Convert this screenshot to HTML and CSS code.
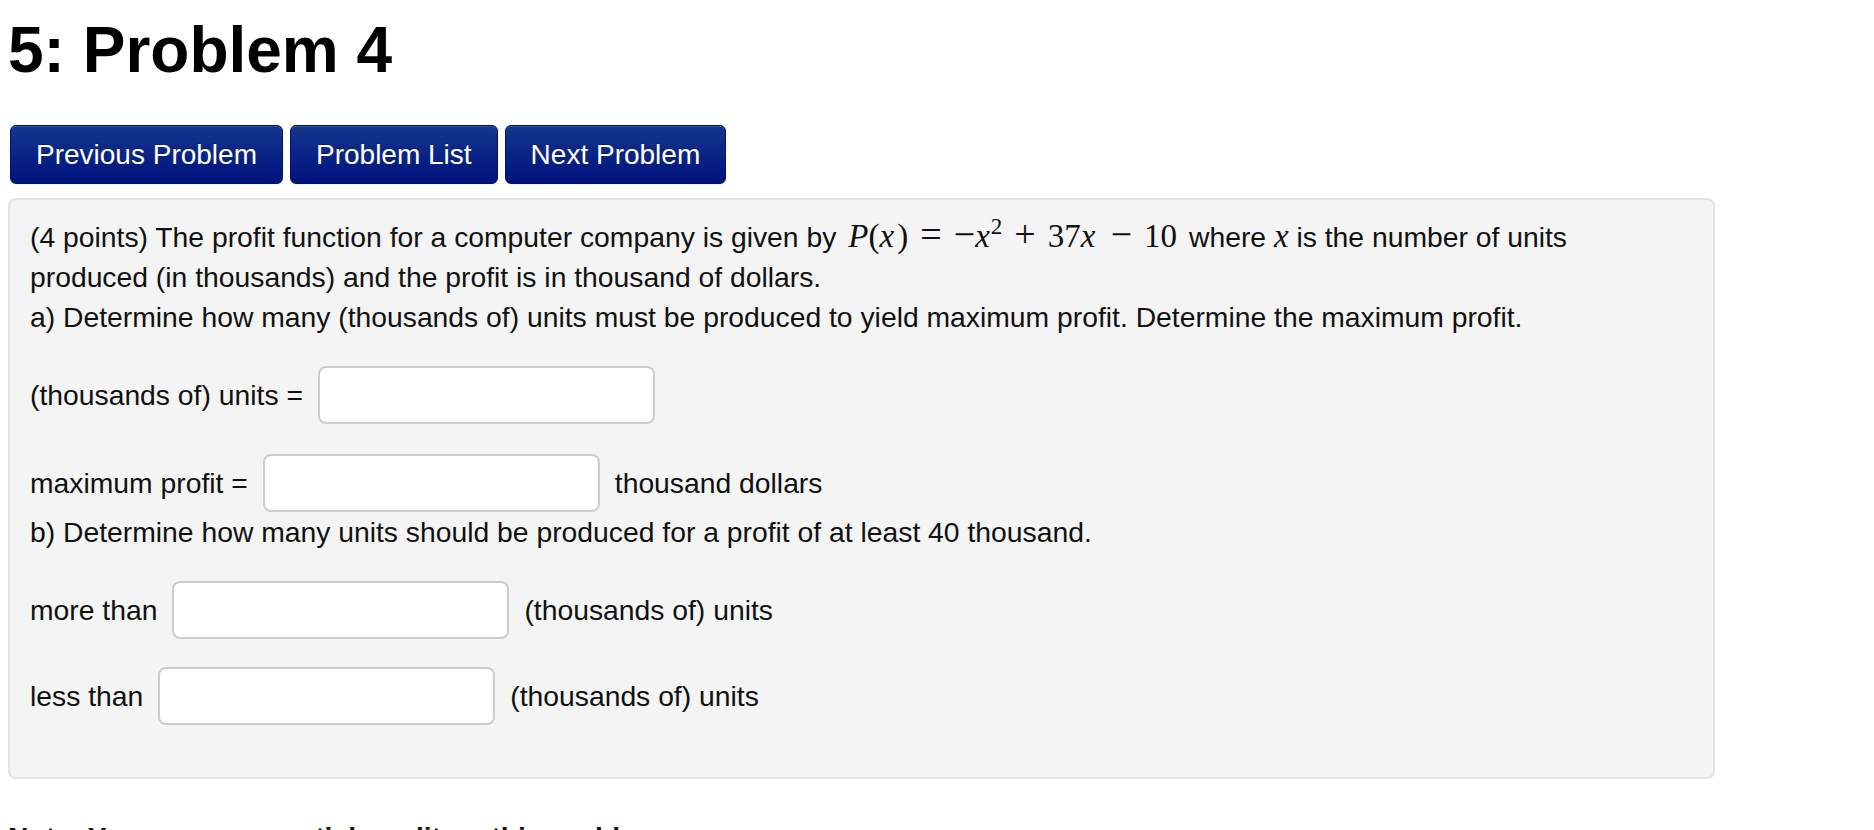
FILE: index.html
```html
<!DOCTYPE html>
<html lang="en">
<head>
    <meta charset="UTF-8">
    <title>5: Problem 4</title>
    <link rel="stylesheet" href="styles.css">
</head>
<body>
    <h1 class="problem-title">5: Problem 4</h1>

    <div class="nav-buttons">
        <a class="btn btn-primary" href="#">Previous Problem</a>
        <a class="btn btn-primary" href="#">Problem List</a>
        <a class="btn btn-primary" href="#">Next Problem</a>
    </div>

    <form class="problem-main">
        <p class="problem-text">
            (4 points) The profit function for a computer company is given by
            <span class="math"><i>P</i>(<i class="var">x</i>)<span class="op rel">=</span><span class="op">&minus;</span><i>x</i><sup>2</sup><span class="op bin">+</span>37<i class="var">x</i><span class="op bin">&minus;</span>10</span>
            where <span class="math math-inline"><i>x</i></span> is the number of units<br>
            produced (in thousands) and the profit is in thousand of dollars.<br>
            a) Determine how many (thousands of) units must be produced to yield maximum profit. Determine the maximum profit.
        </p>

        <div class="answer-row row-units">
            <label for="ans1">(thousands of) units =</label>
            <input type="text" id="ans1" class="answer">
        </div>

        <div class="answer-row row-profit">
            <label for="ans2">maximum profit =</label>
            <input type="text" id="ans2" class="answer">
            <span>thousand dollars</span>
        </div>

        <p class="problem-text">b) Determine how many units should be produced for a profit of at least 40 thousand.</p>

        <div class="answer-row row-more">
            <label for="ans3">more than</label>
            <input type="text" id="ans3" class="answer">
            <span>(thousands of) units</span>
        </div>

        <div class="answer-row row-less">
            <label for="ans4">less than</label>
            <input type="text" id="ans4" class="answer">
            <span>(thousands of) units</span>
        </div>
    </form>

    <p class="note">Note: You can earn partial credit on this problem.</p>
</body>
</html>
```

FILE: styles.css
```css
body {
    margin: 8px;
    font-family: "Liberation Sans", Arial, Helvetica, sans-serif;
    font-size: 28.3px;
    line-height: 40px;
    color: #111;
    background-color: #fff;
}

.problem-title {
    margin: 7px 0 0 0;
    font-size: 64px;
    line-height: 70px;
    font-weight: bold;
    color: #000;
}

.nav-buttons {
    display: flex;
    gap: 7px;
    margin: 40px 0 0 2px;
}

.btn {
    display: inline-block;
    padding: 9px 25px;
    border: 1px solid #001065;
    border-radius: 6px;
    font-size: 28px;
    line-height: 39px;
    text-decoration: none;
    color: #fff;
}

.btn-primary {
    background-image: linear-gradient(#14378f, #00127d);
    text-shadow: 0 -1px 0 rgba(0,0,0,0.25);
    box-shadow: inset 0 1px 0 rgba(255,255,255,0.15), 0 1px 2px rgba(0,0,0,0.05);
}

.problem-main {
    margin-top: 14px;
    padding: 17px 20px 52px 20px;
    background-color: #f4f4f4;
    border: 2px solid #e3e3e3;
    border-radius: 8px;
    width: 1663px;
}

.problem-text {
    margin: 0;
}

.math {
    font-family: "Liberation Serif", "Times New Roman", serif;
    font-size: 33px;
    line-height: 1;
    margin: 0 4px;
}

.math-inline {
    margin: 0;
}

.math i {
    font-style: italic;
}

.math .var {
    margin-right: 0.1em;
}

.math sup {
    font-size: 0.7em;
    line-height: 0;
    vertical-align: 0.55em;
    margin-left: 1px;
}

.op {
    font-size: 1.15em;
    line-height: 0;
}

.rel,
.bin {
    margin: 0 12px;
}

.answer-row {
    display: flex;
    align-items: center;
    gap: 15px;
}

.row-units {
    margin-top: 29px;
}

.row-profit {
    margin-top: 30px;
}

.row-more {
    margin-top: 29px;
}

.row-less {
    margin-top: 28px;
}

.answer {
    box-sizing: border-box;
    width: 337px;
    height: 58px;
    margin: 0;
    padding: 4px 12px;
    border: 2px solid #cccccc;
    border-radius: 8px;
    background-color: #fff;
    font-family: inherit;
    font-size: 28px;
}

.note {
    margin: 38px 0 0 0;
    font-weight: bold;
}
```
